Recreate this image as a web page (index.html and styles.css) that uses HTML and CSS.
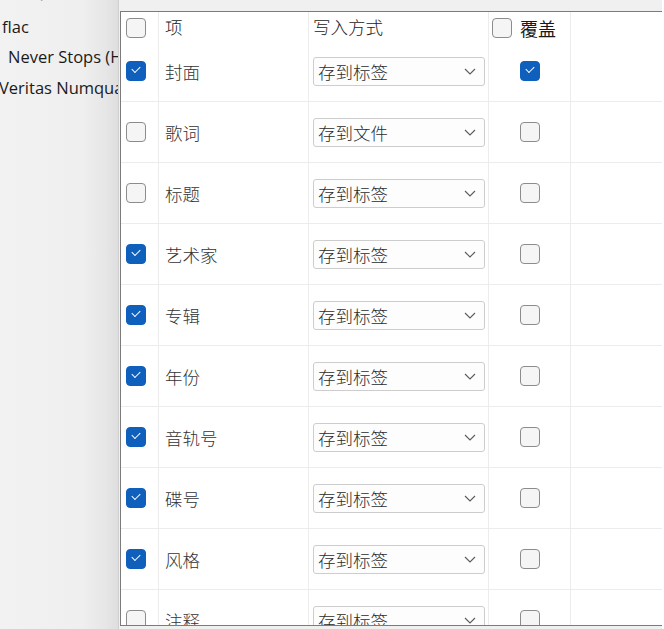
FILE: index.html
```
<!DOCTYPE html>
<html>
<head>
<meta charset="utf-8">
<link rel="stylesheet" href="styles.css">
</head>
<body>
<div class="app">
  <div class="side">
    <div class="side-list">
      <div class="side-item">艺术家</div>
      <div class="side-item i-flac">flac</div>
      <div class="side-item i-never">Never Stops (Hardwell Remix)</div>
      <div class="side-item i-ver">Veritas Numquam Perit</div>
    </div>
  </div>
  <div class="sep"></div>
  <div class="dialog">
    <div class="topstrip"></div>
    <div class="panel">
      <div class="table">
        <div class="row head">
          <div class="cell c-chk"><span class="box"></span></div>
          <div class="cell c-name">项</div>
          <div class="cell c-mode">写入方式</div>
          <div class="cell c-over head-over"><span class="box"></span><span class="over-label">覆盖</span></div>
          <div class="cell c-rest"></div>
        </div>

        <div class="row">
          <div class="cell c-chk"><span class="box on"></span></div>
          <div class="cell c-name">封面</div>
          <div class="cell c-mode"><div class="select">存到标签<svg class="chev" width="12" height="7" viewBox="0 0 12 7"><polyline points="1,1 6,6 11,1" fill="none" stroke="#5a5a5a" stroke-width="1.1"/></svg></div></div>
          <div class="cell c-over"><span class="box on"></span></div>
          <div class="cell c-rest"></div>
        </div>

        <div class="row">
          <div class="cell c-chk"><span class="box"></span></div>
          <div class="cell c-name">歌词</div>
          <div class="cell c-mode"><div class="select">存到文件<svg class="chev" width="12" height="7" viewBox="0 0 12 7"><polyline points="1,1 6,6 11,1" fill="none" stroke="#5a5a5a" stroke-width="1.1"/></svg></div></div>
          <div class="cell c-over"><span class="box"></span></div>
          <div class="cell c-rest"></div>
        </div>

        <div class="row">
          <div class="cell c-chk"><span class="box"></span></div>
          <div class="cell c-name">标题</div>
          <div class="cell c-mode"><div class="select">存到标签<svg class="chev" width="12" height="7" viewBox="0 0 12 7"><polyline points="1,1 6,6 11,1" fill="none" stroke="#5a5a5a" stroke-width="1.1"/></svg></div></div>
          <div class="cell c-over"><span class="box"></span></div>
          <div class="cell c-rest"></div>
        </div>

        <div class="row">
          <div class="cell c-chk"><span class="box on"></span></div>
          <div class="cell c-name">艺术家</div>
          <div class="cell c-mode"><div class="select">存到标签<svg class="chev" width="12" height="7" viewBox="0 0 12 7"><polyline points="1,1 6,6 11,1" fill="none" stroke="#5a5a5a" stroke-width="1.1"/></svg></div></div>
          <div class="cell c-over"><span class="box"></span></div>
          <div class="cell c-rest"></div>
        </div>

        <div class="row">
          <div class="cell c-chk"><span class="box on"></span></div>
          <div class="cell c-name">专辑</div>
          <div class="cell c-mode"><div class="select">存到标签<svg class="chev" width="12" height="7" viewBox="0 0 12 7"><polyline points="1,1 6,6 11,1" fill="none" stroke="#5a5a5a" stroke-width="1.1"/></svg></div></div>
          <div class="cell c-over"><span class="box"></span></div>
          <div class="cell c-rest"></div>
        </div>

        <div class="row">
          <div class="cell c-chk"><span class="box on"></span></div>
          <div class="cell c-name">年份</div>
          <div class="cell c-mode"><div class="select">存到标签<svg class="chev" width="12" height="7" viewBox="0 0 12 7"><polyline points="1,1 6,6 11,1" fill="none" stroke="#5a5a5a" stroke-width="1.1"/></svg></div></div>
          <div class="cell c-over"><span class="box"></span></div>
          <div class="cell c-rest"></div>
        </div>

        <div class="row">
          <div class="cell c-chk"><span class="box on"></span></div>
          <div class="cell c-name">音轨号</div>
          <div class="cell c-mode"><div class="select">存到标签<svg class="chev" width="12" height="7" viewBox="0 0 12 7"><polyline points="1,1 6,6 11,1" fill="none" stroke="#5a5a5a" stroke-width="1.1"/></svg></div></div>
          <div class="cell c-over"><span class="box"></span></div>
          <div class="cell c-rest"></div>
        </div>

        <div class="row">
          <div class="cell c-chk"><span class="box on"></span></div>
          <div class="cell c-name">碟号</div>
          <div class="cell c-mode"><div class="select">存到标签<svg class="chev" width="12" height="7" viewBox="0 0 12 7"><polyline points="1,1 6,6 11,1" fill="none" stroke="#5a5a5a" stroke-width="1.1"/></svg></div></div>
          <div class="cell c-over"><span class="box"></span></div>
          <div class="cell c-rest"></div>
        </div>

        <div class="row">
          <div class="cell c-chk"><span class="box on"></span></div>
          <div class="cell c-name">风格</div>
          <div class="cell c-mode"><div class="select">存到标签<svg class="chev" width="12" height="7" viewBox="0 0 12 7"><polyline points="1,1 6,6 11,1" fill="none" stroke="#5a5a5a" stroke-width="1.1"/></svg></div></div>
          <div class="cell c-over"><span class="box"></span></div>
          <div class="cell c-rest"></div>
        </div>

        <div class="row">
          <div class="cell c-chk"><span class="box"></span></div>
          <div class="cell c-name">注释</div>
          <div class="cell c-mode"><div class="select">存到标签<svg class="chev" width="12" height="7" viewBox="0 0 12 7"><polyline points="1,1 6,6 11,1" fill="none" stroke="#5a5a5a" stroke-width="1.1"/></svg></div></div>
          <div class="cell c-over"><span class="box"></span></div>
          <div class="cell c-rest"></div>
        </div>
      </div>
    </div>
    <div class="bottomstrip"></div>
  </div>
</div>
</body>
</html>
```
FILE: styles.css
```
html, body {
  margin: 0;
  padding: 0;
  background: #ffffff;
}
body {
  width: 664px;
  height: 629px;
  overflow: hidden;
  font-family: "Noto Sans CJK SC", "Noto Sans", sans-serif;
}
.app {
  display: flex;
  height: 629px;
}
.side {
  width: 118px;
  flex: none;
  overflow: hidden;
  background: linear-gradient(to right, #f2f2f2 0%, #efefef 70%, #e6e6e6 90%, #dedede 100%);
}
.side-list {
  margin-top: -23px;
  font-family: "Open Sans", "Noto Sans", sans-serif;
  font-size: 16.5px;
  color: #1a1a1a;
  white-space: nowrap;
}
.side-item {
  height: 30.5px;
  line-height: 30.5px;
}
.side-item:first-child {
  height: 34.5px;
}
.i-flac { padding-left: 2px; }
.i-never { padding-left: 8px; }
.i-ver { margin-left: -1px; }
.sep {
  width: 2px;
  flex: none;
  background: linear-gradient(to right, #cfcfcf 50%, #f1f1f1 50%);
}
.dialog {
  width: 542px;
  flex: none;
  display: flex;
  flex-direction: column;
  background: #f0f0f0;
}
.topstrip {
  height: 11px;
  flex: none;
  background: #f0f0f0;
}
.panel {
  height: 613px;
  flex: none;
  overflow: hidden;
  background: #ffffff;
  border-top: 1px solid #7b7b7b;
  border-left: 1px solid #7b7b7b;
  border-bottom: 1px solid #7b7b7b;
}
.bottomstrip {
  flex: 1;
  background: #f0f0f0;
}
.row {
  display: grid;
  grid-template-columns: 38px 150px 180px 82px 1fr;
  height: 61px;
  border-bottom: 1px solid #ececec;
  box-sizing: border-box;
}
.row.head {
  height: 29px;
  border-bottom: none;
}
.cell {
  display: flex;
  align-items: center;
  border-right: 1px solid #ececec;
  box-sizing: border-box;
  font-size: 17.5px;
  font-weight: 300;
  color: #2b2b2b;
}
.head .cell { padding-top: 3px; }
.c-rest { border-right: none; }
.c-chk { padding-left: 5px; }
.c-name { padding-left: 6px; color: #333333; }
.c-mode { padding-left: 4px; }
.head .c-name, .head .c-mode { color: #222222; }
.head .c-name, .head .c-mode { padding-top: 0; }
.c-over { justify-content: center; }
.head-over {
  justify-content: flex-start;
  padding-left: 3px;
}
.over-label {
  margin-left: 8px;
  font-size: 18px;
  font-weight: 400;
  color: #1a1a1a;
}
.box {
  width: 18px;
  height: 18px;
  border: 1px solid #8c8c8c;
  border-radius: 4px;
  background: #f5f5f5;
  display: inline-block;
  flex: none;
  position: relative;
}
.box.on {
  background: #0f5fbd;
  border-color: #0f5fbd;
}
.box.on::after {
  content: "";
  position: absolute;
  left: 5px;
  top: 4px;
  width: 7px;
  height: 4px;
  border-left: 1.3px solid #ffffff;
  border-bottom: 1.3px solid #ffffff;
  transform: rotate(-45deg);
}
.select {
  width: 172px;
  height: 29px;
  box-sizing: border-box;
  border: 1px solid #cdcdcd;
  border-radius: 3px;
  background: #fdfdfd;
  display: flex;
  align-items: center;
  padding-left: 4px;
  padding-right: 8px;
  font-size: 17.5px;
  font-weight: 300;
  color: #2b2b2b;
  justify-content: space-between;
}
.chev { flex: none; }
```
